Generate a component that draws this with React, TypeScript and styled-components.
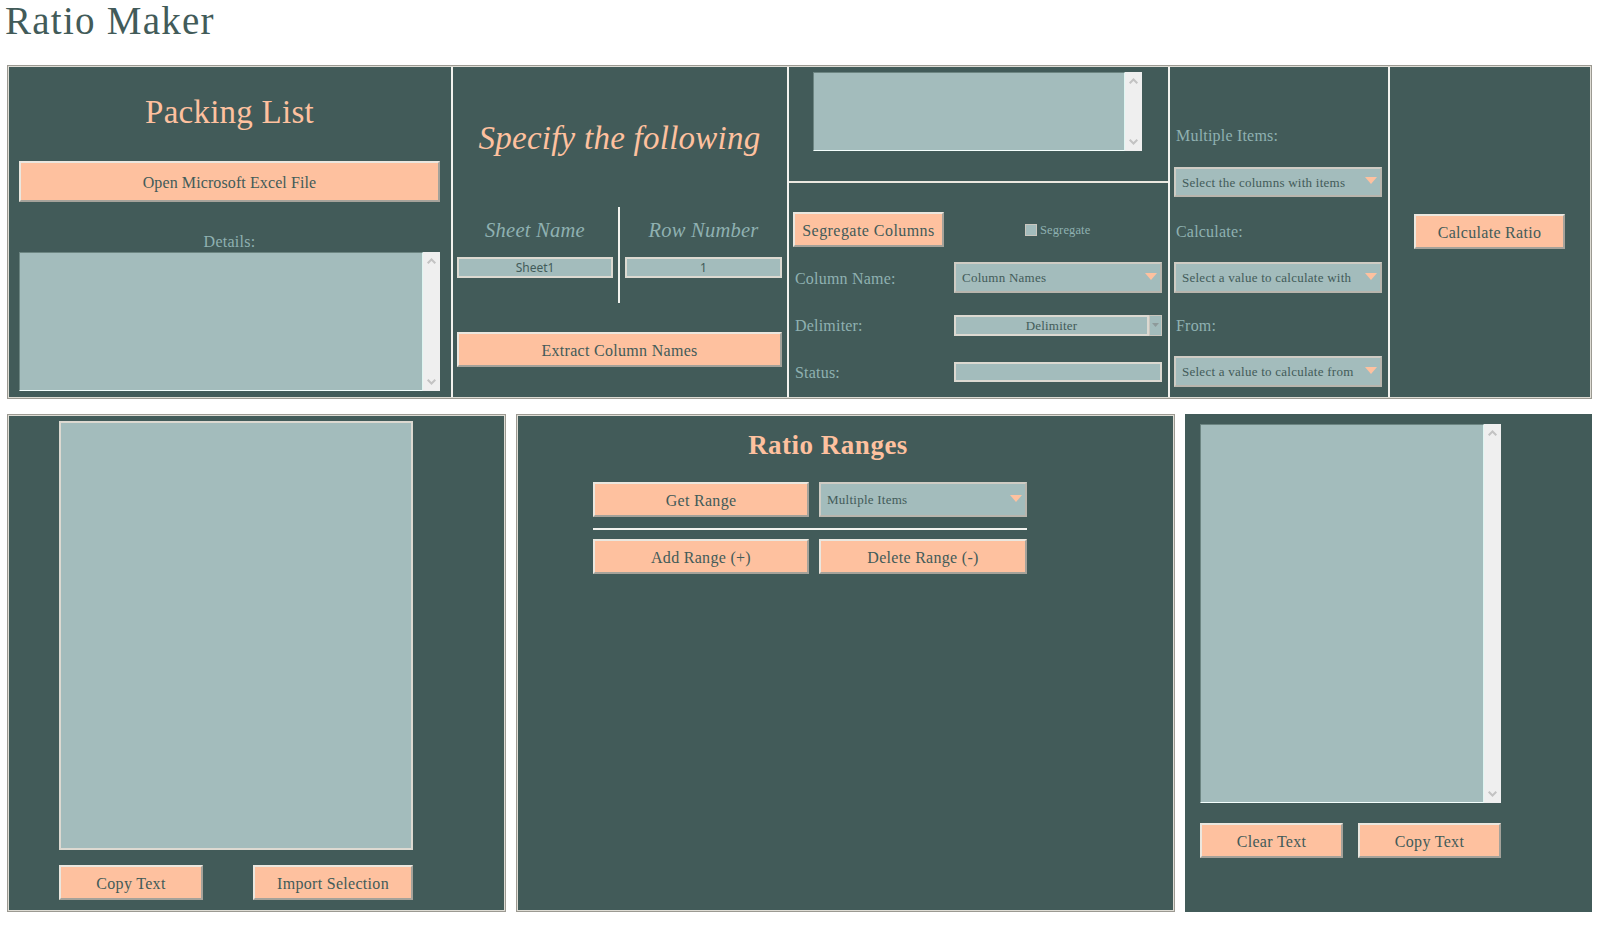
import React from "react";
import styled, { createGlobalStyle } from "styled-components";

const DARK = "#425b59";
const TEAL = "#a3bcbc";
const PEACH = "#fec19f";
const LABEL = "#8fb1b1";
const SERIF = '"Liberation Serif", serif';

const Global = createGlobalStyle`
  html, body { margin: 0; padding: 0; background: #fff; }
  * { box-sizing: border-box; }
  body { font-family: ${SERIF}; }
`;

const Page = styled.div`
  width: 1605px;
  height: 925px;
  overflow: hidden;
`;
const PageTitle = styled.h1`
  margin: 0;
  height: 65px;
  padding-left: 5px;
  font: 400 39px/42px ${SERIF};
  letter-spacing: 1.25px;
  color: ${DARK};
`;
const TopPanel = styled.section`
  margin-left: 7px;
  width: 1585px;
  height: 334px;
  padding: 1px;
  background: ${DARK};
  border: 1px solid #9c9a92;
  box-shadow: inset 0 0 0 1px #dedcd4;
  display: grid;
  grid-template-columns: 442px 336px 381px 220px 202px;
`;
const Column = styled.div<{ $first?: boolean }>`
  border-left: ${(p) => (p.$first ? "0" : "2px solid #f2f2ee")};
  min-width: 0;
`;
const PackingColumn = styled(Column)`
  padding: 27px 0 0 10px;
`;
const Heading = styled.h2`
  margin: 0;
  width: 421px;
  text-align: center;
  font: 400 33px/36px ${SERIF};
  letter-spacing: 0.25px;
  color: ${PEACH};
`;
const Button = styled.button<{ $w?: number; $h?: number; $track?: number }>`
  display: block;
  width: ${(p) => (p.$w ? `${p.$w}px` : "100%")};
  height: ${(p) => p.$h ?? 35}px;
  padding: 2px 0 0;
  background: ${PEACH};
  color: ${DARK};
  border: 2px solid;
  border-color: #ebe7df #a5a29a #a5a29a #ebe7df;
  font: 400 16px/1 ${SERIF};
  letter-spacing: ${(p) => p.$track ?? 0.3}px;
`;
const OpenButton = styled(Button)`
  margin-top: 31px;
`;
const DetailsLabel = styled.div`
  margin-top: 31px;
  width: 421px;
  text-align: center;
  font: 400 16px/18px ${SERIF};
  letter-spacing: 0.25px;
  color: ${LABEL};
`;
const Box = styled.div<{ $w: number; $h: number }>`
  display: flex;
  width: ${(p) => p.$w}px;
  height: ${(p) => p.$h}px;
`;
const Area = styled.textarea`
  display: block;
  flex: 1;
  min-width: 0;
  height: 100%;
  padding: 0;
  resize: none;
  outline: none;
  overflow: hidden;
  background: ${TEAL};
  border: 1px solid;
  border-color: #6c8582 #dff5f1 #f4fffd #6c8582;
`;
const Bar = styled.div`
  width: 17px;
  flex: none;
  background: #efefef;
  display: flex;
  flex-direction: column;
  justify-content: space-between;
  align-items: center;
  padding: 6px 0;
`;
const DetailsSlot = styled.div`
  margin-top: 1px;
`;
const Chevron = styled.svg`
  display: block;
  width: 9px;
  height: 6px;
  fill: none;
  stroke: #c3c3c3;
  stroke-width: 2;
`;

const ScrollBox = ({ w, h }: { w: number; h: number }) => (
  <Box $w={w} $h={h}>
    <Area readOnly aria-label="text" />
    <Bar>
      <Chevron viewBox="0 0 9 6"><path d="M.7 5.3 4.5 1.5l3.8 3.8" /></Chevron>
      <Chevron viewBox="0 0 9 6"><path d="M.7.7l3.8 3.8L8.3.7" /></Chevron>
    </Bar>
  </Box>
);

const SpecifyColumn = styled(Column)`
  padding: 51px 0 0 4px;
`;
const SpecifyTitle = styled.h2`
  margin: 0;
  width: 325px;
  text-align: center;
  font: italic 400 33px/40px ${SERIF};
  letter-spacing: 0.25px;
  color: ${PEACH};
`;
const FieldRow = styled.div`
  margin-top: 49px;
  width: 325px;
  height: 96px;
  display: grid;
  grid-template-columns: 156px 2px 157px;
  column-gap: 5px;
`;
const Field = styled.div`
  padding-top: 11px;
`;
const RowDivider = styled.div`
  background: #f2f2ee;
`;
const FieldLabel = styled.div`
  text-align: center;
  font: italic 400 20.5px/24px ${SERIF};
  letter-spacing: 0.25px;
  color: ${LABEL};
`;
const FieldInput = styled.input`
  display: block;
  width: 100%;
  height: 21px;
  margin-top: 15px;
  padding: 0;
  outline: none;
  text-align: center;
  background: ${TEAL};
  border: 2px solid #dcd9d1;
  color: ${DARK};
  font: 400 12px/1 "Noto Sans", sans-serif;
`;
const ExtractButton = styled(Button)`
  margin-top: 29px;
`;

const NotesSection = styled.div`
  height: 116px;
  padding: 5px 0 0 24px;
  border-bottom: 2px solid #ebe8e0;
`;
const SegregateForm = styled.div`
  padding: 29px 0 0 4px;
`;
const FormRow = styled.div<{ $top?: number; $h: number }>`
  margin-top: ${(p) => p.$top ?? 0}px;
  height: ${(p) => p.$h}px;
  display: grid;
  grid-template-columns: 161px 208px;
  align-items: center;
`;
const RowLabel = styled.div`
  padding: 2px 0 0 2px;
  font: 400 16px/20px ${SERIF};
  letter-spacing: 0.2px;
  color: ${LABEL};
`;
const CheckRow = styled.label`
  padding: 1px 0 0 71px;
  display: flex;
  align-items: center;
  gap: 3px;
  font: 400 12.5px/1 ${SERIF};
  letter-spacing: 0.12px;
  color: ${LABEL};
`;
const CheckMark = styled.span`
  width: 12px;
  height: 12px;
  background: ${TEAL};
  border: 1px solid #c9c6be;
`;
const SelectBox = styled.div<{ $h: number }>`
  height: ${(p) => p.$h}px;
  display: flex;
  align-items: center;
  justify-content: space-between;
  padding: 0 3px 0 6px;
  background: ${TEAL};
  border: 2px solid;
  border-color: #cfccc4 #b8b5ad #b8b5ad #cfccc4;
  color: ${DARK};
  font: 400 13px/1 ${SERIF};
  letter-spacing: 0.25px;
`;
const Caret = styled.svg`
  display: block;
  flex: none;
  width: 12px;
  height: 7px;
  fill: ${PEACH};
  margin-top: -3px;
`;
const Select = ({ label, h = 31 }: { label: string; h?: number }) => (
  <SelectBox $h={h}>
    {label}
    <Caret viewBox="0 0 12 7"><path d="M0 0h12L6 7z" /></Caret>
  </SelectBox>
);
const Combo = styled.div`
  height: 21px;
  display: grid;
  grid-template-columns: 195px 13px;
`;
const ComboValue = styled.div`
  background: ${TEAL};
  border: 2px solid #dcd9d1;
  color: ${DARK};
  text-align: center;
  font: 400 13px/17px ${SERIF};
  letter-spacing: 0.2px;
`;
const ComboArrow = styled.div`
  background: ${TEAL};
  border: 1px solid #c9c6be;
  display: flex;
  align-items: center;
  justify-content: center;
`;
const ComboCaret = styled.svg`
  display: block;
  width: 7px;
  height: 4px;
  fill: #8e9a9a;
`;
const StatusBox = styled.div`
  height: 20px;
  background: ${TEAL};
  border: 2px solid #dcd9d1;
`;

const ChooseColumn = styled(Column)`
  padding: 57px 0 0 4px;
`;
const ChooseSelect = styled.div<{ $top: number; $bottom: number }>`
  width: 208px;
  margin: ${(p) => p.$top}px 0 ${(p) => p.$bottom}px;
`;
const RatioColumn = styled(Column)`
  padding: 147px 0 0 24px;
`;

const BottomRow = styled.div`
  margin: 15px 0 0 7px;
  display: grid;
  grid-template-columns: 499px 659px 407px;
  column-gap: 10px;
  height: 498px;
`;
const Panel = styled.section`
  background: ${DARK};
  border: 1px solid #9c9a92;
  box-shadow: inset 0 0 0 1px #dedcd4;
  padding: 1px;
  height: 100%;
`;
const LeftPanel = styled(Panel)`
  padding: 6px 0 0 51px;
`;
const BigArea = styled(Area)`
  flex: none;
  width: 354px;
  height: 429px;
  border: 2px solid #dcd9d1;
`;
const LeftButtons = styled.div`
  margin-top: 15px;
  display: flex;
  gap: 50px;
`;
const RangesTitle = styled.h2`
  margin: 13px 35px 0 0;
  text-align: center;
  font: 700 27px/32px ${SERIF};
  letter-spacing: 0.5px;
  color: ${PEACH};
`;
const RangeGrid = styled.div`
  margin: 21px 0 0 75px;
  width: 434px;
  display: grid;
  grid-template-columns: 216px 208px;
  column-gap: 10px;
`;
const RangeRule = styled.div`
  grid-column: 1 / -1;
  height: 2px;
  margin: 11px 0 9px;
  background: #f2f2ee;
`;
const RightPanel = styled.section`
  background: ${DARK};
  height: 100%;
  padding: 10px 0 0 15px;
`;
const RightButtons = styled.div`
  margin-top: 20px;
  display: flex;
  gap: 15px;
`;

export default function App() {
  return (
    <Page>
      <Global />
      <PageTitle>Ratio Maker</PageTitle>
      <TopPanel>
        <PackingColumn $first>
          <Heading>Packing List</Heading>
          <OpenButton $w={421} $h={41} $track={0.1}>Open Microsoft Excel File</OpenButton>
          <DetailsLabel>Details:</DetailsLabel>
          <DetailsSlot>
            <ScrollBox w={421} h={139} />
          </DetailsSlot>
        </PackingColumn>

        <SpecifyColumn>
          <SpecifyTitle>Specify the following</SpecifyTitle>
          <FieldRow>
            <Field>
              <FieldLabel>Sheet Name</FieldLabel>
              <FieldInput readOnly value="Sheet1" />
            </Field>
            <RowDivider />
            <Field>
              <FieldLabel>Row Number</FieldLabel>
              <FieldInput readOnly value="1" />
            </Field>
          </FieldRow>
          <ExtractButton $w={325}>Extract Column Names</ExtractButton>
        </SpecifyColumn>

        <Column>
          <NotesSection>
            <ScrollBox w={329} h={79} />
          </NotesSection>
          <SegregateForm>
            <FormRow $h={35}>
              <Button $w={151} $track={0.45}>Segregate Columns</Button>
              <CheckRow>
                <CheckMark />
                Segregate
              </CheckRow>
            </FormRow>
            <FormRow $top={15} $h={31}>
              <RowLabel>Column Name:</RowLabel>
              <Select label="Column Names" />
            </FormRow>
            <FormRow $top={21} $h={21}>
              <RowLabel>Delimiter:</RowLabel>
              <Combo>
                <ComboValue>Delimiter</ComboValue>
                <ComboArrow>
                  <ComboCaret viewBox="0 0 7 4"><path d="M0 0h7L3.5 4z" /></ComboCaret>
                </ComboArrow>
              </Combo>
            </FormRow>
            <FormRow $top={26} $h={20}>
              <RowLabel>Status:</RowLabel>
              <StatusBox />
            </FormRow>
          </SegregateForm>
        </Column>

        <ChooseColumn>
          <RowLabel>Multiple Items:</RowLabel>
          <ChooseSelect $top={21} $bottom={23}>
            <Select label="Select the columns with items" h={30} />
          </ChooseSelect>
          <RowLabel>Calculate:</RowLabel>
          <ChooseSelect $top={20} $bottom={21}>
            <Select label="Select a value to calculate with" />
          </ChooseSelect>
          <RowLabel>From:</RowLabel>
          <ChooseSelect $top={20} $bottom={0}>
            <Select label="Select a value to calculate from" />
          </ChooseSelect>
        </ChooseColumn>

        <RatioColumn>
          <Button $w={151}>Calculate Ratio</Button>
        </RatioColumn>
      </TopPanel>

      <BottomRow>
        <LeftPanel>
          <BigArea readOnly aria-label="text" />
          <LeftButtons>
            <Button $w={144}>Copy Text</Button>
            <Button $w={160}>Import Selection</Button>
          </LeftButtons>
        </LeftPanel>

        <Panel>
          <RangesTitle>Ratio Ranges</RangesTitle>
          <RangeGrid>
            <Button>Get Range</Button>
            <Select label="Multiple Items" h={35} />
            <RangeRule />
            <Button>Add Range (+)</Button>
            <Button>Delete Range (-)</Button>
          </RangeGrid>
        </Panel>

        <RightPanel>
          <ScrollBox w={301} h={379} />
          <RightButtons>
            <Button $w={143}>Clear Text</Button>
            <Button $w={143}>Copy Text</Button>
          </RightButtons>
        </RightPanel>
      </BottomRow>
    </Page>
  );
}
